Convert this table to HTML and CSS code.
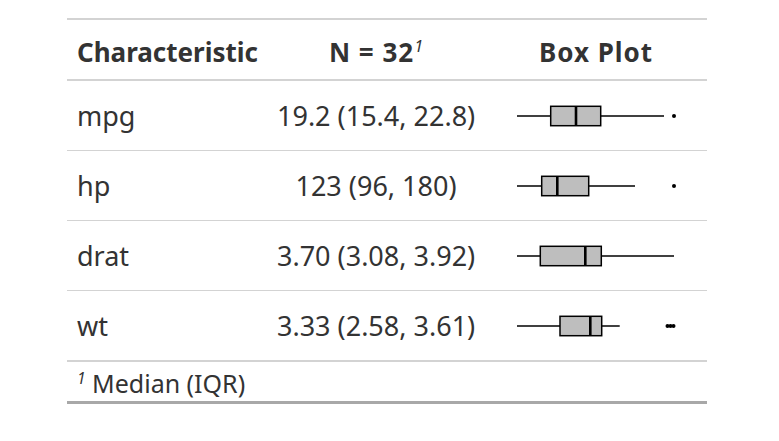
FILE: index.html
```html
<!DOCTYPE html>
<html lang="en">
<head>
<meta charset="utf-8">
<title>Summary table</title>
<link rel="stylesheet" href="styles.css">
</head>
<body>
<table class="gt">
  <colgroup>
    <col class="c1"><col class="c2"><col class="c3">
  </colgroup>
  <thead>
    <tr>
      <th class="left">Characteristic</th>
      <th class="center wide">N = 32<sup class="fn">1</sup></th>
      <th class="center wide">Box Plot</th>
    </tr>
  </thead>
  <tbody>
    <tr>
      <td class="left">mpg</td>
      <td class="center">19.2 (15.4, 22.8)</td>
      <td class="plot">
        <svg class="box" width="172" height="24" viewBox="0 0 172 24">
          <line x1="7" y1="12" x2="154" y2="12" class="wh"/>
          <rect x="40.7" y="2.3" width="50" height="19.4" class="bx"/>
          <line x1="66" y1="2.3" x2="66" y2="21.7" class="md"/>
          <circle cx="164" cy="12" r="2" class="pt"/>
        </svg>
      </td>
    </tr>
    <tr>
      <td class="left">hp</td>
      <td class="center">123 (96, 180)</td>
      <td class="plot">
        <svg class="box" width="172" height="24" viewBox="0 0 172 24">
          <line x1="7" y1="12" x2="125" y2="12" class="wh"/>
          <rect x="31.7" y="2.3" width="47" height="19.4" class="bx"/>
          <line x1="47.3" y1="2.3" x2="47.3" y2="21.7" class="md"/>
          <circle cx="164" cy="12" r="2" class="pt"/>
        </svg>
      </td>
    </tr>
    <tr>
      <td class="left">drat</td>
      <td class="center">3.70 (3.08, 3.92)</td>
      <td class="plot">
        <svg class="box" width="172" height="24" viewBox="0 0 172 24">
          <line x1="7" y1="12" x2="164" y2="12" class="wh"/>
          <rect x="30.3" y="2.3" width="61" height="19.4" class="bx"/>
          <line x1="75.3" y1="2.3" x2="75.3" y2="21.7" class="md"/>
        </svg>
      </td>
    </tr>
    <tr class="last">
      <td class="left">wt</td>
      <td class="center">3.33 (2.58, 3.61)</td>
      <td class="plot">
        <svg class="box" width="172" height="24" viewBox="0 0 172 24">
          <line x1="7" y1="12" x2="109.7" y2="12" class="wh"/>
          <rect x="50" y="2.3" width="41.7" height="19.4" class="bx"/>
          <line x1="80.3" y1="2.3" x2="80.3" y2="21.7" class="md"/>
          <circle cx="157.5" cy="12" r="2" class="pt"/>
          <circle cx="160.5" cy="12" r="2" class="pt"/>
          <circle cx="163.5" cy="12" r="2" class="pt"/>
        </svg>
      </td>
    </tr>
  </tbody>
  <tfoot>
    <tr>
      <td colspan="3" class="foot"><sup class="fn">1</sup> Median (IQR)</td>
    </tr>
  </tfoot>
</table>
</body>
</html>
```

FILE: styles.css
```css
html, body {
  margin: 0;
  padding: 0;
  background: #ffffff;
}

.gt {
  margin: 18px 0 0 67px;
  border-collapse: separate;
  border-spacing: 0;
  table-layout: fixed;
  width: 640px;
  font-family: "Noto Sans", "DejaVu Sans", sans-serif;
  font-size: 27px;
  color: #333333;
}

.c1 { width: 200px; }
.c2 { width: 218px; }
.c3 { width: 222px; }

.gt th {
  font-size: 26px;
  font-weight: bold;
  height: 55px;
  padding: 4px 10px 0;
  border-top: 2px solid #d3d3d3;
  border-bottom: 2px solid #d3d3d3;
  vertical-align: middle;
  white-space: nowrap;
}

.gt th.wide {
  letter-spacing: 1px;
}

.gt td {
  height: 69px;
  padding: 0 10px;
  border-bottom: 1px solid #d3d3d3;
  vertical-align: middle;
  white-space: nowrap;
}

.gt tbody tr.last td {
  border-bottom: none;
}

.left { text-align: left; }
.center { text-align: center; }

.gt td.plot {
  padding: 0;
  text-align: left;
}

.box {
  display: block;
  margin-left: 25px;
}

.wh { stroke: #000000; stroke-width: 1.5; }
.bx { fill: #bebebe; stroke: #000000; stroke-width: 1.5; }
.md { stroke: #000000; stroke-width: 2.6; }
.pt { fill: #000000; }

.fn {
  font-style: italic;
  font-weight: normal;
  font-size: 0.62em;
  line-height: 0;
  vertical-align: 0.6em;
  letter-spacing: 0;
}

.gt td.foot {
  font-size: 25px;
  height: 37px;
  border-top: 2px solid #d3d3d3;
  border-bottom: 3px solid #a8a8a8;
  padding: 2px 10px 0;
}
```
